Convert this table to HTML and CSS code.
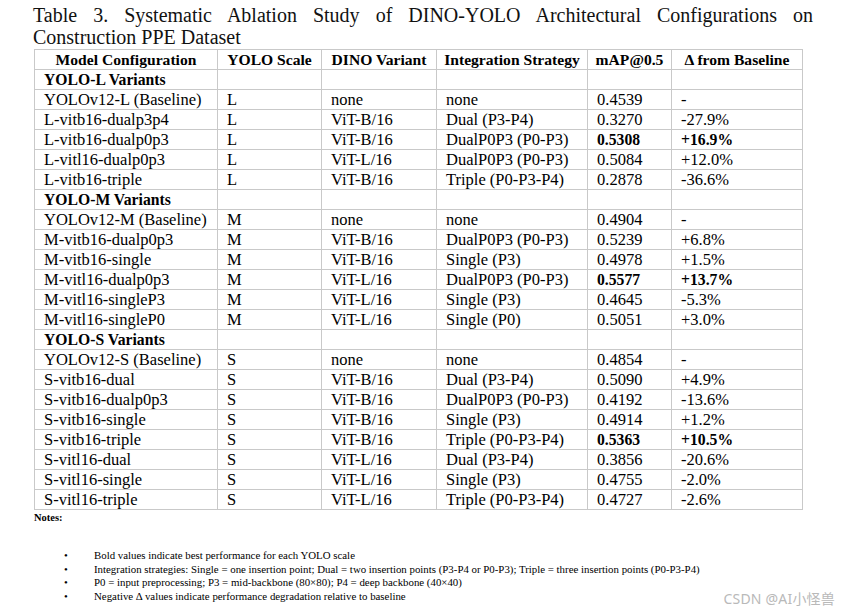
FILE: index.html
```html
<!DOCTYPE html>
<html lang="en">
<head>
<meta charset="utf-8">
<title>Table 3</title>
<link rel="stylesheet" href="styles.css">
</head>
<body>
<div class="page">
  <h1 class="title">Table 3. Systematic Ablation Study of DINO-YOLO Architectural Configurations on Construction PPE Dataset</h1>
  <table class="abl">
    <colgroup>
      <col class="c1"><col class="c2"><col class="c3"><col class="c4"><col class="c5"><col class="c6">
    </colgroup>
    <thead>
      <tr><th>Model Configuration</th><th>YOLO Scale</th><th>DINO Variant</th><th>Integration Strategy</th><th>mAP@0.5</th><th>Δ from Baseline</th></tr>
    </thead>
    <tbody>
      <tr class="group"><td>YOLO-L Variants</td><td></td><td></td><td></td><td></td><td></td></tr>
      <tr><td>YOLOv12-L (Baseline)</td><td>L</td><td>none</td><td>none</td><td>0.4539</td><td>-</td></tr>
      <tr><td>L-vitb16-dualp3p4</td><td>L</td><td>ViT-B/16</td><td>Dual (P3-P4)</td><td>0.3270</td><td>-27.9%</td></tr>
      <tr><td>L-vitb16-dualp0p3</td><td>L</td><td>ViT-B/16</td><td>DualP0P3 (P0-P3)</td><td class="b">0.5308</td><td class="b">+16.9%</td></tr>
      <tr><td>L-vitl16-dualp0p3</td><td>L</td><td>ViT-L/16</td><td>DualP0P3 (P0-P3)</td><td>0.5084</td><td>+12.0%</td></tr>
      <tr><td>L-vitb16-triple</td><td>L</td><td>ViT-B/16</td><td>Triple (P0-P3-P4)</td><td>0.2878</td><td>-36.6%</td></tr>
      <tr class="group"><td>YOLO-M Variants</td><td></td><td></td><td></td><td></td><td></td></tr>
      <tr><td>YOLOv12-M (Baseline)</td><td>M</td><td>none</td><td>none</td><td>0.4904</td><td>-</td></tr>
      <tr><td>M-vitb16-dualp0p3</td><td>M</td><td>ViT-B/16</td><td>DualP0P3 (P0-P3)</td><td>0.5239</td><td>+6.8%</td></tr>
      <tr><td>M-vitb16-single</td><td>M</td><td>ViT-B/16</td><td>Single (P3)</td><td>0.4978</td><td>+1.5%</td></tr>
      <tr><td>M-vitl16-dualp0p3</td><td>M</td><td>ViT-L/16</td><td>DualP0P3 (P0-P3)</td><td class="b">0.5577</td><td class="b">+13.7%</td></tr>
      <tr><td>M-vitl16-singleP3</td><td>M</td><td>ViT-L/16</td><td>Single (P3)</td><td>0.4645</td><td>-5.3%</td></tr>
      <tr><td>M-vitl16-singleP0</td><td>M</td><td>ViT-L/16</td><td>Single (P0)</td><td>0.5051</td><td>+3.0%</td></tr>
      <tr class="group"><td>YOLO-S Variants</td><td></td><td></td><td></td><td></td><td></td></tr>
      <tr><td>YOLOv12-S (Baseline)</td><td>S</td><td>none</td><td>none</td><td>0.4854</td><td>-</td></tr>
      <tr><td>S-vitb16-dual</td><td>S</td><td>ViT-B/16</td><td>Dual (P3-P4)</td><td>0.5090</td><td>+4.9%</td></tr>
      <tr><td>S-vitb16-dualp0p3</td><td>S</td><td>ViT-B/16</td><td>DualP0P3 (P0-P3)</td><td>0.4192</td><td>-13.6%</td></tr>
      <tr><td>S-vitb16-single</td><td>S</td><td>ViT-B/16</td><td>Single (P3)</td><td>0.4914</td><td>+1.2%</td></tr>
      <tr><td>S-vitb16-triple</td><td>S</td><td>ViT-B/16</td><td>Triple (P0-P3-P4)</td><td class="b">0.5363</td><td class="b">+10.5%</td></tr>
      <tr><td>S-vitl16-dual</td><td>S</td><td>ViT-L/16</td><td>Dual (P3-P4)</td><td>0.3856</td><td>-20.6%</td></tr>
      <tr><td>S-vitl16-single</td><td>S</td><td>ViT-L/16</td><td>Single (P3)</td><td>0.4755</td><td>-2.0%</td></tr>
      <tr><td>S-vitl16-triple</td><td>S</td><td>ViT-L/16</td><td>Triple (P0-P3-P4)</td><td>0.4727</td><td>-2.6%</td></tr>
    </tbody>
  </table>
  <p class="notes-label">Notes:</p>
  <ul class="notes">
    <li><span class="dot">•</span><span>Bold values indicate best performance for each YOLO scale</span></li>
    <li><span class="dot">•</span><span>Integration strategies: Single = one insertion point; Dual = two insertion points (P3-P4 or P0-P3); Triple = three insertion points (P0-P3-P4)</span></li>
    <li><span class="dot">•</span><span>P0 = input preprocessing; P3 = mid-backbone (80×80); P4 = deep backbone (40×40)</span></li>
    <li><span class="dot">•</span><span>Negative Δ values indicate performance degradation relative to baseline</span></li>
  </ul>
  <div class="watermark">CSDN @AI小怪兽</div>
</div>
</body>
</html>
```

FILE: styles.css
```css
html, body {
  margin: 0;
  padding: 0;
  background: #ffffff;
}

.page {
  position: relative;
  width: 847px;
  height: 615px;
  padding-top: 4px;
  box-sizing: border-box;
  font-family: "Liberation Serif", "Times New Roman", serif;
  color: #000;
}

.title {
  margin: 0 0 0 33px;
  width: 780px;
  font-size: 20px;
  font-weight: normal;
  line-height: 22px;
  text-align: justify;
  color: #111;
}

.abl {
  margin: 1px 0 0 34px;
  border-collapse: collapse;
  table-layout: fixed;
  width: 768px;
  font-size: 16.5px;
}

.c1 { width: 183px; }
.c2 { width: 104px; }
.c3 { width: 115px; }
.c4 { width: 151px; }
.c5 { width: 84px; }
.c6 { width: 131px; }

.abl th,
.abl td {
  border: 1px solid #c9c9c9;
  height: 19px;
  padding: 1px 0 0 9px;
  line-height: 18px;
  white-space: nowrap;
  overflow: hidden;
  box-sizing: border-box;
  vertical-align: middle;
}

.abl th {
  font-size: 15.6px;
  font-weight: bold;
  text-align: center;
  padding: 1px 0 0 0;
}

.abl td {
  text-align: left;
}

.abl .group td:first-child {
  font-weight: bold;
  font-size: 15.7px;
}

.abl td.b {
  font-weight: bold;
  font-size: 15.7px;
}

.notes-label {
  margin: 2px 0 0 34px;
  font-size: 10.5px;
  font-weight: bold;
  line-height: 12px;
}

.notes {
  list-style: none;
  margin: 25px 0 0 0;
  padding: 0 0 0 64px;
  font-size: 10.85px;
  line-height: 13.7px;
}

.notes li {
  display: flex;
}

.notes .dot {
  width: 30px;
  flex: none;
}

.watermark {
  position: absolute;
  right: 12px;
  bottom: 8px;
  font-family: "Noto Sans", "Noto Sans CJK SC", sans-serif;
  font-size: 14px;
  line-height: 16px;
  color: #b9b9b9;
  letter-spacing: 0.2px;
}
```
